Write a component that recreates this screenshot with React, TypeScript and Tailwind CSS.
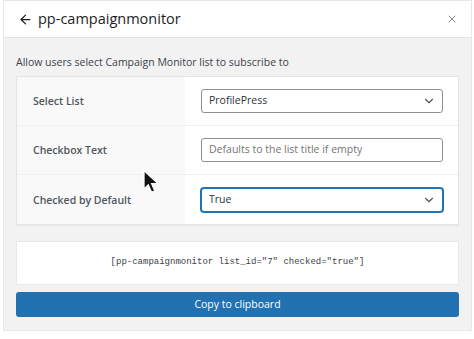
import { ChevronDown, X, ArrowLeft } from "lucide-react";

const sans = "font-['Open_Sans',_'Noto_Sans',_sans-serif]";

function Row({ label, children, last }: { label: string; children: React.ReactNode; last?: boolean }) {
  return (
    <div className={`flex h-[49px] ${last ? "" : "border-b border-[#f0f0f0]"}`}>
      <div className="flex w-[168px] items-center bg-[#f9f9f9] pl-4 pt-[2px] text-[10.5px] font-semibold text-[#50575e]">
        {label}
      </div>
      <div className="flex flex-1 items-center bg-white pl-4 pr-[15px]">{children}</div>
    </div>
  );
}

function Select({ value, focused }: { value: string; focused?: boolean }) {
  return (
    <div
      className={`flex h-[24px] w-full items-center justify-between rounded-[3px] border bg-white pl-[7px] pr-[6px] text-[10.5px] text-[#2c3338] ${
        focused ? "border-[#2271b1] shadow-[0_0_0_1px_#2271b1]" : "border-[#8c8f94]"
      }`}
    >
      <span>{value}</span>
      <ChevronDown size={14} strokeWidth={2} className="text-[#50575e]" />
    </div>
  );
}

export default function App() {
  return (
    <div className={`h-[339px] w-[474px] bg-white ${sans}`}>
      <div className="relative ml-[3px] h-[331px] w-[469px] border border-[#e8e8e8] bg-[#f2f2f2]">
        <header className="flex h-[37px] items-center border-b border-[#e4e4e4] bg-white pl-[14px] pr-[13px]">
          <ArrowLeft size={15} strokeWidth={2} className="text-[#1e1e1e]" />
          <span className="ml-[5px] text-[14.5px] text-[#1e1e1e]">pp-campaignmonitor</span>
          <X size={12} strokeWidth={2} className="ml-auto text-[#8c8f94]" />
        </header>

        <div className="px-[12px]">
          <p className="mt-[16px] text-[10.5px] leading-[16px] text-[#3c434a]">
            Allow users select Campaign Monitor list to subscribe to
          </p>

          <div className="mt-[6px] border border-[#e2e4e7] bg-white shadow-[0_1px_1px_rgba(0,0,0,0.04)]">
            <Row label="Select List">
              <Select value="ProfilePress" />
            </Row>
            <Row label="Checkbox Text">
              <div className="flex h-[24px] w-full items-center rounded-[3px] border border-[#8c8f94] bg-white pl-[7px] text-[10.5px] text-[#757575]">
                Defaults to the list title if empty
              </div>
            </Row>
            <Row label="Checked by Default" last>
              <Select value="True" focused />
            </Row>
          </div>

          <div className="mt-[16px] flex h-[44px] items-center justify-center border border-[#e8e8e8] bg-white font-['Liberation_Mono',_monospace] text-[9px] text-[#3c434a]">
            [pp-campaignmonitor list_id="7" checked="true"]
          </div>

          <button
            type="button"
            className="mt-[7px] flex h-[25px] w-full items-center justify-center rounded-[3px] bg-[#2271b1] text-[10.5px] text-white"
          >
            Copy to clipboard
          </button>
        </div>

        {/* mouse pointer overlay */}
        <svg
          className="absolute left-[139px] top-[168px]"
          width="17"
          height="27"
          viewBox="0 0 16 24"
        >
          <path d="M1 1 L1 18 L5 14 L8 21 L11 20 L8 13 L14 13 Z" fill="#111" stroke="#fff" strokeWidth="1" />
        </svg>
      </div>
    </div>
  );
}
